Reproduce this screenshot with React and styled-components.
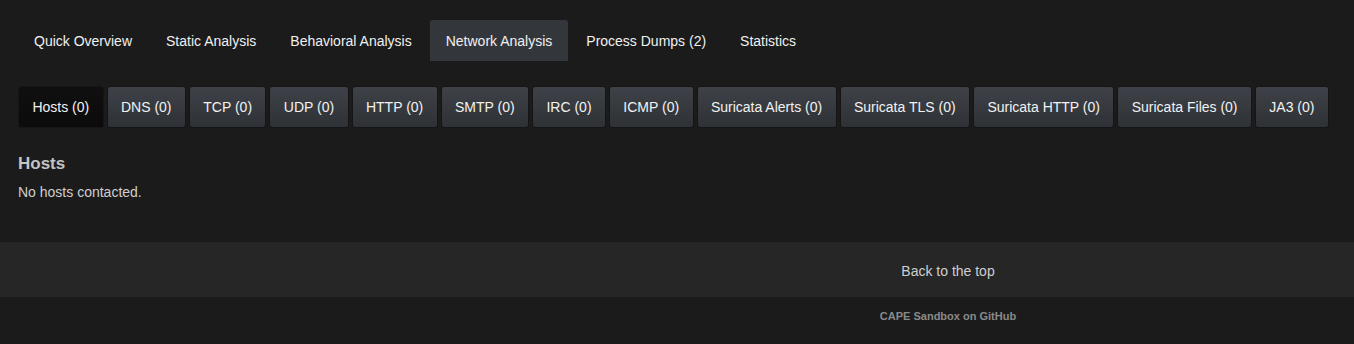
import styled, { createGlobalStyle } from "styled-components";

const GlobalStyle = createGlobalStyle`
    body {
        margin: 0;
        background-color: #1b1b1b;
        font-family: "Liberation Sans", Arial, sans-serif;
        color: #e0e0e0;
    }
`;

const mainTabs = [
    "Quick Overview",
    "Static Analysis",
    "Behavioral Analysis",
    "Network Analysis",
    "Process Dumps (2)",
    "Statistics",
];

const netTabs = [
    "Hosts (0)", "DNS (0)", "TCP (0)", "UDP (0)", "HTTP (0)", "SMTP (0)", "IRC (0)",
    "ICMP (0)", "Suricata Alerts (0)", "Suricata TLS (0)", "Suricata HTTP (0)",
    "Suricata Files (0)", "JA3 (0)",
];

const App = () => {
    return (
        <>
        <GlobalStyle/>
        <Page>
            <NavTabs>
                {mainTabs.map((tab) => (
                    <NavTab key={tab} $active={tab === "Network Analysis"}>{tab}</NavTab>
                ))}
            </NavTabs>
            <SubTabs>
                {netTabs.map((tab, index) => (
                    <SubTab key={tab} $active={index === 0}>{tab}</SubTab>
                ))}
            </SubTabs>
            <Section>
                <SectionTitle>Hosts</SectionTitle>
                <Empty>No hosts contacted.</Empty>
            </Section>
        </Page>
        <Footer>
            <FooterInner>
                <BackTop href="#">Back to the top</BackTop>
            </FooterInner>
        </Footer>
        <Credits>
            <CreditsLink href="#">CAPE Sandbox on GitHub</CreditsLink>
        </Credits>
        </>
    )
}

export default App;

// Styled Components
const Page = styled.div`
    padding: 20px 18px 0 18px;
`;

const NavTabs = styled.div`
    display: flex;
    align-items: center;
`;

const NavTab = styled.div`
    height: 41px;
    box-sizing: border-box;
    padding: 0 16px;
    margin-right: 2px;
    display: flex;
    align-items: center;
    white-space: nowrap;
    font-size: 14px;
    color: #f0f0f0;
    border-radius: 3px 3px 0 0;
    background-color: ${(p) => (p.$active ? "#33373c" : "transparent")};
    cursor: pointer;
`;

const SubTabs = styled.div`
    display: flex;
    gap: 3px;
    margin-top: 25px;
`;

const SubTab = styled.button`
    flex-shrink: 0;
    white-space: nowrap;
    height: 42px;
    box-sizing: border-box;
    padding: 0 13.4px;
    font-family: "Liberation Sans", Arial, sans-serif;
    font-size: 14px;
    color: #f2f2f2;
    border: 1px solid #151515;
    border-radius: 3px;
    background: ${(p) => (p.$active
        ? "linear-gradient(#101010, #0b0b0b)"
        : "linear-gradient(#3e4248, #2e3135)")};
    cursor: pointer;
`;

const Section = styled.div`
    padding-top: 25px;
    padding-bottom: 41px;
`;

const SectionTitle = styled.h3`
    margin: 0;
    font-size: 17px;
    font-weight: bold;
    color: #c4c4c4;
    line-height: 22px;
`;

const Empty = styled.p`
    margin: 8px 0 0 0;
    font-size: 14px;
    color: #cfcfcf;
    line-height: 18px;
`;

const Footer = styled.div`
    background-color: #262626;
    height: 55px;
    display: flex;
    align-items: center;
`;

const FooterInner = styled.div`
    flex: 1;
    padding: 3px 0 0 542px;
    text-align: center;
`;

const BackTop = styled.a`
    font-size: 14px;
    color: #cfcfcf;
    text-decoration: none;
`;

const Credits = styled.div`
    padding: 9px 0 0 542px;
    text-align: center;
`;

const CreditsLink = styled.a`
    font-size: 11px;
    font-weight: bold;
    color: #8a8a8a;
    text-decoration: none;
`;
